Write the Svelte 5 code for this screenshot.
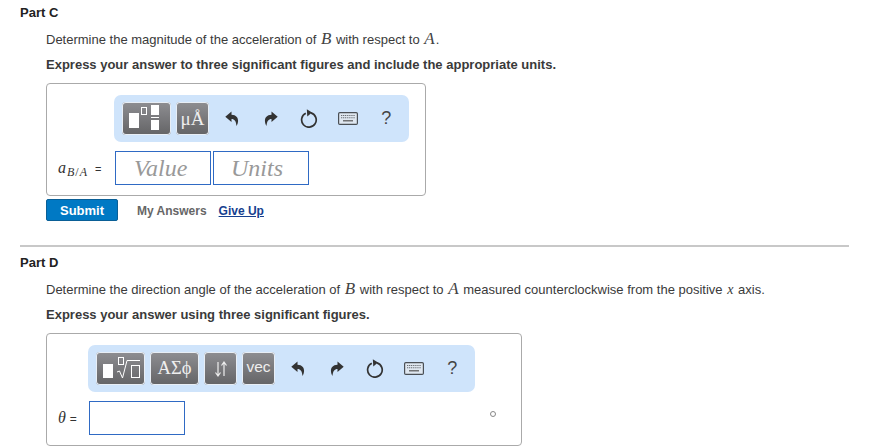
<div class="page">
  {#snippet tools()}
    <span class="tool first">
      <svg width="14" height="15" viewBox="0 0 14 15"><path d="M6.500 .5L.3 5.800 6.500 11V8C9.600 8 11 10 11.500 15 14.300 10.500 13.800 4 6.500 3.700Z" fill="#333"/></svg>
    </span>
    <span class="tool">
      <svg width="14" height="15" viewBox="0 0 14 15"><path d="M7.500 .5L13.700 5.800 7.500 11V8C4.400 8 3 10 2.500 15-.3 10.500.2 4 7.500 3.700Z" fill="#333"/></svg>
    </span>
    <span class="tool">
      <svg width="18" height="19" viewBox="0 0 18 19"><path d="M5.800 4.300A7.300 7.300 0 1 0 11 3.900" fill="none" stroke="#333" stroke-width="1.700"/><path d="M6.800 .3L12 3.500 7.300 7.400Z" fill="#333"/></svg>
    </span>
    <span class="tool">
      <svg width="20" height="13" viewBox="0 0 20 13"><rect x=".6" y=".6" width="18.800" height="11.800" rx="1.200" fill="#dfe7f0" stroke="#4a4f55" stroke-width="1.200"/><path d="M3 3.500H17M3 5.800H17" stroke="#6a6f75" stroke-width="1.100" stroke-dasharray="1.200 .7"/><path d="M5 8.800H15" stroke="#555" stroke-width="1.200"/></svg>
    </span>
    <span class="tool help">?</span>
  {/snippet}

  <h3>Part C</h3>
  <p class="prompt">Determine the magnitude of the acceleration of <i class="m">B</i> with respect to <i class="m">A</i>.</p>
  <p class="strong">Express your answer to three significant figures and include the appropriate units.</p>

  <div class="box c">
    <div class="bar cbar">
      <div class="btns">
        <span class="btn wide">
          <svg width="49" height="33" viewBox="0 0 49 33"><rect x="7" y="11" width="10" height="15" fill="#fff"/><rect x="19.500" y="5.500" width="5" height="7" fill="none" stroke="#fff"/><rect x="29" y="3" width="8" height="10" fill="#fff"/><rect x="29" y="15" width="8" height="1" fill="#fff"/><rect x="29" y="18" width="8" height="10" fill="#fff"/></svg>
        </span>
        <span class="btn narrow mu">μÅ</span>
      </div>
      {@render tools()}
    </div>
    <div class="row">
      <span class="label"><i class="a">a</i><sub><i>B</i> / <i>A</i></sub><span class="eq">=</span></span>
      <span class="input ph value">Value</span>
      <span class="input ph units">Units</span>
    </div>
  </div>

  <div class="actions">
    <span class="submit">Submit</span>
    <span class="mine">My Answers</span>
    <span class="giveup">Give Up</span>
  </div>

  <hr />

  <h3 class="d">Part D</h3>
  <p class="prompt">Determine the direction angle of the acceleration of <i class="m">B</i> with respect to <i class="m">A</i> measured counterclockwise from the positive <i class="x">x</i> axis.</p>
  <p class="strong">Express your answer using three significant figures.</p>

  <div class="box dbox">
    <div class="bar dbar">
      <div class="btns">
        <span class="btn wide">
          <svg width="49" height="33" viewBox="0 0 49 33"><rect x="7" y="12" width="10" height="14" fill="#fff"/><rect x="22.500" y="5.500" width="5" height="7" fill="none" stroke="#fff"/><path d="M21 20L23.500 19 26.500 26 31 8.500H44" fill="none" stroke="#fff"/><rect x="35.500" y="13.500" width="8" height="12" fill="none" stroke="#fff"/></svg>
        </span>
        <span class="btn wide greek">ΑΣϕ</span>
        <span class="btn narrow">
          <svg width="16" height="18" viewBox="0 0 16 18"><path d="M5 2V15.500M2.500 12.500L5 16 7.500 12.500M11 16V2.500M8.500 5.500L11 2 13.500 5.500" fill="none" stroke="#eee" stroke-width="1.200"/></svg>
        </span>
        <span class="btn narrow vec">vec</span>
      </div>
      {@render tools()}
    </div>
    <div class="row">
      <span class="label theta"><i class="a">θ</i><span class="eq">=</span></span>
      <span class="input blank"></span>
      <span class="dot"></span>
    </div>
  </div>
</div>

<style>
  :global(body) {
    margin: 0;
    background: #fff;
  }
  .page {
    height: 448px;
    overflow: hidden;
    box-sizing: border-box;
    padding: 5px 26px 0 20px;
    font-family: "Liberation Sans", Arial, sans-serif;
    color: #3a3a3a;
    font-size: 13px;
  }
  h3 {
    margin: 0;
    font-size: 13px;
    line-height: 15px;
    font-weight: bold;
    color: #222;
  }
  .prompt {
    margin: 10px 0 0 26px;
    line-height: 20px;
    white-space: nowrap;
  }
  .strong {
    margin: 5px 0 0 26px;
    line-height: 20px;
    font-weight: bold;
    white-space: nowrap;
  }
  .m {
    font-family: "Liberation Serif", serif;
    font-size: 17px;
    line-height: 15px;
    color: #444;
    font-weight: normal;
    padding: 0 1px;
  }
  .x {
    font-family: "Liberation Serif", serif;
    font-size: 14px;
    padding: 0 1px;
  }
  .box {
    box-sizing: border-box;
    height: 113px;
    margin: 8px 0 0 26px;
    border: 1px solid #aaa;
    border-radius: 4px;
    padding: 11px 0 0;
  }
  .c { width: 380px; }
  .dbox { width: 476px; }
  .bar {
    box-sizing: border-box;
    height: 47px;
    background: #cfe4fb;
    border-radius: 7px;
    display: flex;
    align-items: center;
    padding: 0 0 0 8px;
  }
  .cbar { width: 295px; margin-left: 67px; }
  .dbar { width: 387px; margin-left: 41px; }
  .btns {
    display: flex;
    gap: 5px;
    margin-right: 4px;
  }
  .btn {
    box-sizing: border-box;
    height: 33px;
    border-radius: 4px;
    background: linear-gradient(#8e8e92, #646466);
    box-shadow: 0 0 0 1px #e8eef5 inset;
    color: #eee;
    display: flex;
    align-items: center;
    justify-content: center;
  }
  .wide { width: 49px; }
  .narrow { width: 33px; }
  .mu {
    font-family: "Liberation Serif", serif;
    font-size: 19px;
    padding-top: 1px;
  }
  .greek {
    font-family: "Liberation Serif", serif;
    font-size: 18.500px;
  }
  .vec {
    font-size: 15.500px;
    padding-bottom: 3px;
  }
  .tool {
    width: 38.500px;
    display: flex;
    justify-content: center;
    align-items: center;
  }
  .help {
    font-size: 18px;
    color: #444;
  }
  .row {
    display: flex;
    align-items: flex-start;
    margin-top: 9px;
    position: relative;
  }
  .label {
    width: 68px;
    box-sizing: border-box;
    padding-left: 11px;
    line-height: 34px;
    font-family: "Liberation Serif", serif;
    font-size: 12px;
    white-space: nowrap;
    color: #333;
  }
  .a {
    font-size: 16px;
  }
  .label sub {
    font-size: 12px;
    line-height: 0;
    vertical-align: -3px;
    margin-left: 1px;
    word-spacing: -2px;
  }
  .eq {
    font-family: "Liberation Sans", sans-serif;
    font-size: 11px;
    margin-left: 8px;
  }
  .theta {
    width: 42px;
  }
  .theta .eq {
    font-size: 12px;
    margin-left: 4px;
  }
  .input {
    box-sizing: border-box;
    width: 96px;
    height: 34px;
    border: 1px solid #2f6ac4;
    display: block;
    background: #fff;
  }
  .ph {
    font-family: "Liberation Serif", serif;
    font-style: italic;
    font-size: 24px;
    line-height: 32px;
    color: #999;
  }
  .value { padding-left: 18px; }
  .units { padding-left: 17px; margin-left: 2px; }
  .dot {
    position: absolute;
    left: 443px;
    top: 10px;
    width: 4px;
    height: 4px;
    border: 1px solid #888;
    border-radius: 50%;
  }
  .actions {
    display: flex;
    align-items: center;
    margin: 3px 0 0 26px;
    font-weight: bold;
    font-size: 12px;
  }
  .submit {
    box-sizing: border-box;
    width: 72px;
    height: 22px;
    line-height: 21px;
    text-align: center;
    background: #0079c4;
    border: 1px solid #0a5f96;
    border-radius: 2px;
    color: #fff;
    font-size: 13px;
  }
  .mine {
    margin-left: 19px;
    color: #666;
    padding-top: 1px;
  }
  .giveup {
    margin-left: 12px;
    color: #16408f;
    text-decoration: underline;
    padding-top: 1px;
  }
  hr {
    margin: 24px 0 0;
    border: 0;
    height: 2px;
    background: #c8c8c8;
  }
  .d { margin-top: 8px; }
</style>
